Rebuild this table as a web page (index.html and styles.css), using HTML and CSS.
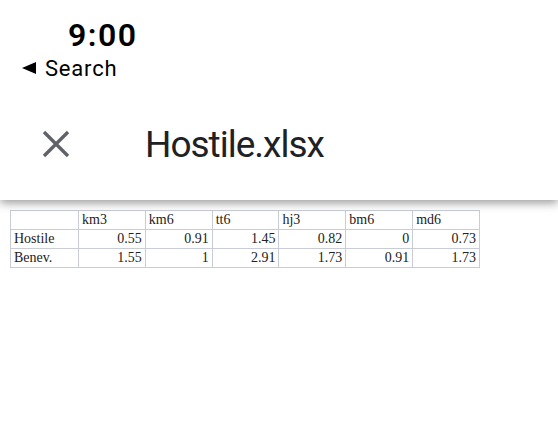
FILE: index.html
```html
<!DOCTYPE html>
<html>
<head>
<meta charset="utf-8">
<link rel="stylesheet" href="styles.css">
</head>
<body>
<header class="top">
  <div class="status">
    <div class="time">9:00</div>
    <div class="back"><span class="tri"></span><span class="back-label">Search</span></div>
  </div>
  <div class="titlebar">
    <svg class="close" width="28" height="28" viewBox="0 0 28 28">
      <path d="M2 2 L26 26 M26 2 L2 26" stroke="#5f6368" stroke-width="3.4" fill="none"/>
    </svg>
    <div class="title">Hostile.xlsx</div>
  </div>
</header>
<main class="sheet">
  <table class="grid">
    <colgroup><col class="first"><col><col><col><col><col><col></colgroup>
    <tr><td class="c0"></td><td class="h">km3</td><td class="h">km6</td><td class="h">tt6</td><td class="h">hj3</td><td class="h">bm6</td><td class="h">md6</td></tr>
    <tr><td class="c0">Hostile</td><td>0.55</td><td>0.91</td><td>1.45</td><td>0.82</td><td>0</td><td>0.73</td></tr>
    <tr><td class="c0">Benev.</td><td>1.55</td><td>1</td><td>2.91</td><td>1.73</td><td>0.91</td><td>1.73</td></tr>
  </table>
</main>
</body>
</html>
```
FILE: styles.css
```css
html, body {
  margin: 0;
  padding: 0;
  background: #fff;
}
.top {
  height: 200px;
  background: #fff;
  box-shadow: 0 3px 9px rgba(0,0,0,0.4);
  position: relative;
  z-index: 1;
  font-family: Roboto, "Liberation Sans", sans-serif;
}
.status {
  padding-top: 17px;
}
.time {
  font-weight: 600;
  font-size: 32px;
  line-height: 36px;
  margin-left: 68px;
  color: #000;
  letter-spacing: 1.5px;
}
.back {
  display: flex;
  align-items: center;
  margin-left: 22px;
  margin-top: 1px;
  height: 28px;
}
.tri {
  width: 0;
  height: 0;
  border-top: 6px solid transparent;
  border-bottom: 6px solid transparent;
  border-right: 14px solid #000;
  margin-right: 9px;
}
.back-label {
  font-size: 22px;
  color: #000;
  letter-spacing: 0.8px;
}
.titlebar {
  display: flex;
  align-items: center;
  margin-top: 46px;
  height: 32px;
}
.close {
  margin-left: 42px;
}
.title {
  margin-left: 75px;
  font-size: 37px;
  letter-spacing: -1px;
  color: #202124;
}
.sheet {
  padding: 10px 0 0 10px;
}
.grid {
  border-collapse: collapse;
  table-layout: fixed;
  width: 470px;
  font-family: "Liberation Serif", serif;
  font-size: 14px;
  color: #222;
}
.grid col.first {
  width: 68px;
}
.grid td {
  border: 1px solid #c8ccd6;
  height: 18px;
  padding: 0 3px;
  text-align: right;
  line-height: 18px;
  white-space: nowrap;
}
.grid td.h, .grid td.c0 {
  text-align: left;
}
```
